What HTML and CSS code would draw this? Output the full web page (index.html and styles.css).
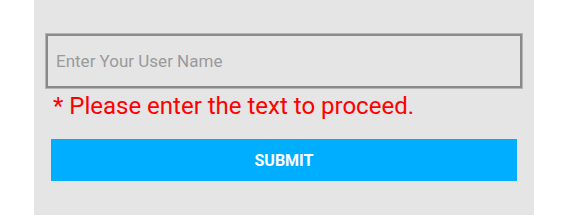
FILE: index.html
```html
<!DOCTYPE html>
<html lang="en">
<head>
    <meta charset="UTF-8">
    <meta name="viewport" content="width=device-width, initial-scale=1.0">
    <title>User Name</title>
    <link rel="stylesheet" href="styles.css">
</head>
<body>
    <div class="panel">
        <input class="name-input" type="text" placeholder="Enter Your User Name">
        <div class="error">* Please enter the text to proceed.</div>
        <button class="submit">SUBMIT</button>
    </div>
</body>
</html>
```

FILE: styles.css
```css
* {
    margin: 0;
    padding: 0;
    box-sizing: border-box;
    font-family: 'Roboto', sans-serif;
}

body {
    background-color: white;
    height: 215px;
}

.panel {
    width: 500px;
    height: 215px;
    margin-left: 34px;
    padding: 34px 12px 0 12px;
    background-color: #e5e5e5;
    display: flex;
    flex-direction: column;
}

.name-input {
    width: 476px;
    height: 54px;
    border: 2px solid #8a8a8a;
    box-shadow: 0 0 0 1px #b5b5b5;
    background-color: #e5e5e5;
    padding: 0 8px;
    font-size: 17px;
    color: #333;
    outline: none;
}

.name-input::placeholder {
    color: #9a9a9a;
}

.error {
    margin: 3px 0 0 7px;
    font-size: 24px;
    line-height: 30px;
    color: #ff0000;
}

.submit {
    margin: 18px 5px 0 5px;
    height: 42px;
    border: none;
    background-color: #00aeff;
    color: white;
    font-size: 16px;
    font-weight: bold;
    cursor: pointer;
}
```
